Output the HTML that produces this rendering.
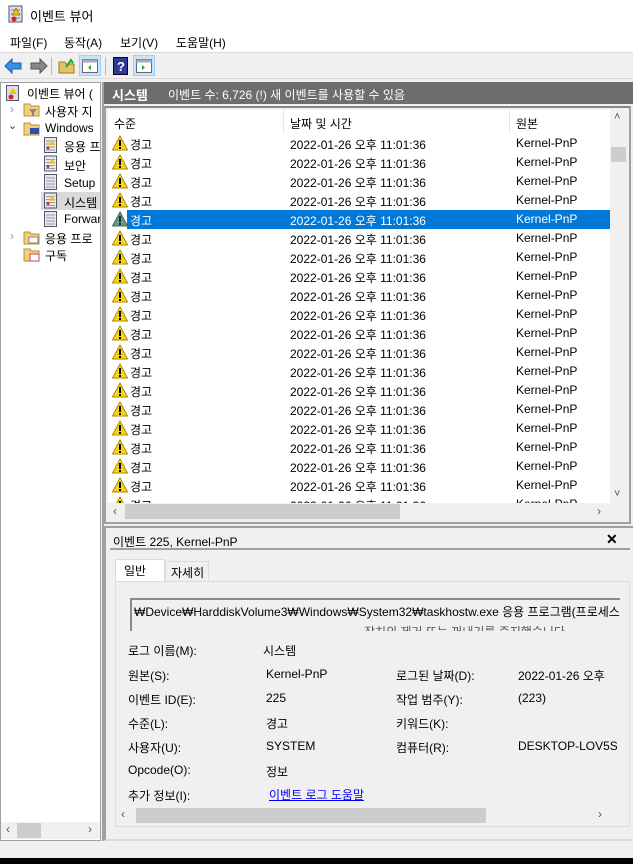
<!DOCTYPE html>
<html><head><meta charset="utf-8"><style>
*{margin:0;padding:0;box-sizing:border-box}
body{width:633px;height:864px;overflow:hidden;background:#f0f0f0;font-family:"Liberation Sans","Noto Sans CJK KR",sans-serif;font-size:12px;color:#000;position:relative}
.a{position:absolute;white-space:nowrap}
.row{position:absolute;left:108px;width:502px;height:19px}
.row span{position:absolute;top:2px}
.sel{background:#0078d7;color:#fff}
</style></head><body>
<div class="a" style="left:0;top:0;width:633px;height:30px;background:#fff"></div>
<svg class="a" style="left:8px;top:5px" width="16" height="18"><rect x="1" y="1" width="13" height="16" fill="#dde" stroke="#556"/><line x1="3" y1="5" x2="12" y2="5" stroke="#889"/><line x1="3" y1="9" x2="12" y2="9" stroke="#889"/><line x1="3" y1="13" x2="12" y2="13" stroke="#889"/><path d="M8 3 L12 10 L4 10Z" fill="#f5c400" stroke="#333" stroke-width=".5"/><circle cx="6" cy="14" r="2.5" fill="#d22"/></svg>
<div class="a" style="left:30px;top:6px;font-size:13px">이벤트 뷰어</div>
<div class="a" style="left:0;top:30px;width:633px;height:22px;background:#fff"></div>
<div class="a" style="left:10px;top:34px">파일(F)</div>
<div class="a" style="left:64px;top:34px">동작(A)</div>
<div class="a" style="left:120px;top:34px">보기(V)</div>
<div class="a" style="left:176px;top:34px">도움말(H)</div>
<div class="a" style="left:0;top:52px;width:633px;height:1px;background:#dadada"></div>
<svg class="a" style="left:4px;top:57px" width="44" height="18"><path d="M1 9 L8 2 L8 6 L17 6 L17 12 L8 12 L8 16Z" fill="#3a8ee6" stroke="#1a5fb0"/><path d="M43 9 L36 2 L36 6 L27 6 L27 12 L36 12 L36 16Z" fill="#888" stroke="#555"/></svg>
<div class="a" style="left:51px;top:57px;width:1px;height:18px;background:#bbb"></div>
<svg class="a" style="left:58px;top:57px" width="18" height="18"><path d="M1 5 L7 5 L8 7 L16 7 L16 16 L1 16Z" fill="#e8c068" stroke="#a07820"/><path d="M8 10 L13 3 L15 6" stroke="#2a2" stroke-width="2" fill="none"/></svg>
<div class="a" style="left:79px;top:55px;width:22px;height:21px;background:#cce4f7;border:1px solid #99d1ff"></div>
<svg class="a" style="left:82px;top:59px" width="16" height="14"><rect x=".5" y=".5" width="15" height="13" fill="#fff" stroke="#667"/><rect x=".5" y=".5" width="15" height="3" fill="#aab"/><path d="M9 6 L6 8.5 L9 11Z" fill="#2a2"/></svg>
<div class="a" style="left:105px;top:57px;width:1px;height:18px;background:#bbb"></div>
<svg class="a" style="left:113px;top:57px" width="15" height="18"><rect x=".5" y=".5" width="14" height="17" fill="#2d3a9a" stroke="#102"/><text x="4" y="14" fill="#fff" font-size="13" font-weight="bold" font-family="Liberation Sans">?</text></svg>
<div class="a" style="left:133px;top:55px;width:22px;height:21px;background:#cce4f7;border:1px solid #99d1ff"></div>
<svg class="a" style="left:136px;top:59px" width="16" height="14"><rect x=".5" y=".5" width="15" height="13" fill="#fff" stroke="#667"/><rect x=".5" y=".5" width="15" height="3" fill="#aab"/><path d="M6 6 L9 8.5 L6 11Z" fill="#2a2"/></svg>
<div class="a" style="left:0;top:78px;width:633px;height:1px;background:#dadada"></div>
<!-- tree -->
<div class="a" style="left:0;top:82px;width:101px;height:759px;background:#fff;border:1px solid #a0a0a0"></div>
<svg class="a" style="left:6px;top:85px" width="14" height="17"><rect x=".5" y=".5" width="12" height="15" fill="#dde" stroke="#556"/><path d="M7 3 L11 9 L3 9Z" fill="#f5c400"/><circle cx="5" cy="12" r="2.5" fill="#d22"/></svg>
<div class="a" style="left:27px;top:85px">이벤트 뷰어 (</div>
<div class="a" style="left:10px;top:102px;color:#999">›</div>
<svg class="a" style="left:23px;top:101px" width="18" height="16"><path d="M1 3 L7 3 L8 5 L16 5 L16 15 L1 15Z" fill="#f2d07a" stroke="#b89030"/><path d="M6 8 L14 8 L11 12 L11 15 L9 15 L9 12Z" fill="#888"/></svg>
<div class="a" style="left:45px;top:103px">사용자 지</div>
<div class="a" style="left:8px;top:119px;color:#333;font-size:11px">⌄</div>
<svg class="a" style="left:23px;top:120px" width="18" height="16"><path d="M1 3 L7 3 L8 5 L16 5 L16 15 L1 15Z" fill="#f2d07a" stroke="#b89030"/><rect x="7" y="8" width="9" height="6" fill="#2a4db0"/></svg>
<div class="a" style="left:45px;top:121px">Windows</div>
<div class="a" style="left:41px;top:192px;width:59px;height:18px;background:#d9d9d9"></div>
<svg class="a" style="left:44px;top:137px" width="14" height="92">
<g><rect x=".5" y=".5" width="12" height="15" fill="#e8e8f0" stroke="#556"/><line x1="2" y1="4" x2="11" y2="4" stroke="#99a"/><line x1="2" y1="7" x2="11" y2="7" stroke="#99a"/><line x1="2" y1="10" x2="11" y2="10" stroke="#99a"/><line x1="2" y1="13" x2="11" y2="13" stroke="#99a"/><path d="M8 3 L11 8 L5 8Z" fill="#f5c400"/><circle cx="4" cy="11" r="1.5" fill="#d22"/></g>
<g transform="translate(0,18.5)"><rect x=".5" y=".5" width="12" height="15" fill="#e8e8f0" stroke="#556"/><line x1="2" y1="4" x2="11" y2="4" stroke="#99a"/><line x1="2" y1="7" x2="11" y2="7" stroke="#99a"/><line x1="2" y1="10" x2="11" y2="10" stroke="#99a"/><line x1="2" y1="13" x2="11" y2="13" stroke="#99a"/><path d="M8 3 L11 8 L5 8Z" fill="#f5c400"/><circle cx="4" cy="11" r="1.5" fill="#d22"/></g>
<g transform="translate(0,37)"><rect x=".5" y=".5" width="12" height="15" fill="#e8e8f0" stroke="#556"/><line x1="2" y1="4" x2="11" y2="4" stroke="#99a"/><line x1="2" y1="7" x2="11" y2="7" stroke="#99a"/><line x1="2" y1="10" x2="11" y2="10" stroke="#99a"/><line x1="2" y1="13" x2="11" y2="13" stroke="#99a"/></g>
<g transform="translate(0,55.5)"><rect x=".5" y=".5" width="12" height="15" fill="#e8e8f0" stroke="#556"/><line x1="2" y1="4" x2="11" y2="4" stroke="#99a"/><line x1="2" y1="7" x2="11" y2="7" stroke="#99a"/><line x1="2" y1="10" x2="11" y2="10" stroke="#99a"/><line x1="2" y1="13" x2="11" y2="13" stroke="#99a"/><path d="M8 3 L11 8 L5 8Z" fill="#f5c400"/><circle cx="4" cy="11" r="1.5" fill="#d22"/></g>
<g transform="translate(0,74)"><rect x=".5" y=".5" width="12" height="15" fill="#e8e8f0" stroke="#556"/><line x1="2" y1="4" x2="11" y2="4" stroke="#99a"/><line x1="2" y1="7" x2="11" y2="7" stroke="#99a"/><line x1="2" y1="10" x2="11" y2="10" stroke="#99a"/><line x1="2" y1="13" x2="11" y2="13" stroke="#99a"/></g>
</svg>
<div class="a" style="left:64px;top:138px;width:36px;overflow:hidden">응용 프</div>
<div class="a" style="left:64px;top:157px">보안</div>
<div class="a" style="left:64px;top:176px">Setup</div>
<div class="a" style="left:64px;top:194px;width:36px;overflow:hidden">시스템</div>
<div class="a" style="left:64px;top:212px;width:36px;overflow:hidden">Forwar</div>
<div class="a" style="left:10px;top:229px;color:#999">›</div>
<svg class="a" style="left:23px;top:229px" width="18" height="16"><path d="M1 3 L7 3 L8 5 L16 5 L16 15 L1 15Z" fill="#f2d07a" stroke="#b89030"/><rect x="6" y="8" width="9" height="6" fill="#fff" stroke="#888"/></svg>
<div class="a" style="left:45px;top:230px;width:55px;overflow:hidden">응용 프로</div>
<svg class="a" style="left:23px;top:246px" width="18" height="16"><path d="M1 3 L7 3 L8 5 L16 5 L16 15 L1 15Z" fill="#f2d07a" stroke="#b89030"/><rect x="7" y="8" width="9" height="7" fill="#fff" stroke="#c44"/></svg>
<div class="a" style="left:45px;top:247px">구독</div>
<div class="a" style="left:1px;top:822px;width:99px;height:17px;background:#f0f0f0"></div>
<div class="a" style="left:6px;top:822px;color:#555">‹</div>
<div class="a" style="left:17px;top:823px;width:24px;height:15px;background:#cdcdcd"></div>
<div class="a" style="left:88px;top:822px;color:#555">›</div>
<div class="a" style="left:102px;top:82px;width:2px;height:759px;background:#a0a0a0"></div>
<div class="a" style="left:104px;top:82px;width:529px;height:22px;background:#6d6d6d"></div>
<div class="a" style="left:112px;top:85px;color:#fff;font-size:13px;font-weight:bold">시스템</div>
<div class="a" style="left:168px;top:86px;color:#fff">이벤트 수: 6,726 (!) 새 이벤트를 사용할 수 있음</div>
<div class="a" style="left:104px;top:106px;width:527px;height:418px;border:2px solid #a0a0a0;border-top-color:#888"></div>
<div class="a" style="left:108px;top:110px;width:502px;height:393px;background:#fff;overflow:hidden">
<div class="a" style="left:6px;top:5px">수준</div>
<div class="a" style="left:175px;top:0;width:1px;height:24px;background:#e5e5e5"></div>
<div class="a" style="left:182px;top:5px">날짜 및 시간</div>
<div class="a" style="left:401px;top:0;width:1px;height:24px;background:#e5e5e5"></div>
<div class="a" style="left:408px;top:5px">원본</div>
</div>
<svg width="0" height="0" style="position:absolute"><defs><g id="w"><path d="M8 1 L15.5 15 L0.5 15Z" fill="#f7d51b" stroke="#b08a00"/><rect x="7" y="5" width="2" height="6" fill="#000"/><rect x="7" y="12" width="2" height="2" fill="#000"/></g><g id="wg"><path d="M8 1 L15.5 15 L0.5 15Z" fill="#6b9a80" stroke="#3e6a55"/><rect x="7" y="5" width="2" height="6" fill="#0a2a50"/><rect x="7" y="12" width="2" height="2" fill="#0a2a50"/></g></defs></svg>
<div class="a" style="left:108px;top:134px;width:502px;height:369px;overflow:hidden">
<div id="rows"></div>
</div>
<div class="a" style="left:610px;top:110px;width:17px;height:393px;background:#f0f0f0"></div>
<div class="a" style="left:614px;top:111px;color:#555;font-size:11px">˄</div>
<div class="a" style="left:611px;top:147px;width:15px;height:15px;background:#cdcdcd"></div>
<div class="a" style="left:614px;top:488px;color:#555;font-size:11px">˅</div>
<div class="a" style="left:108px;top:503px;width:519px;height:17px;background:#f0f0f0"></div>
<div class="a" style="left:113px;top:504px;color:#555">‹</div>
<div class="a" style="left:125px;top:504px;width:275px;height:15px;background:#cdcdcd"></div>
<div class="a" style="left:597px;top:504px;color:#555">›</div>
<div class="a" style="left:104px;top:526px;width:529px;height:315px;border:2px solid #a0a0a0;border-right:none;border-bottom:2px solid #dcdcdc"></div>
<div class="a" style="left:113px;top:533px">이벤트 225, Kernel-PnP</div>
<div class="a" style="left:606px;top:531px;font-weight:bold;font-size:14px">✕</div>
<div class="a" style="left:110px;top:548px;width:520px;height:2px;background:#a0a0a0"></div>
<div class="a" style="left:115px;top:559px;width:50px;height:23px;background:#fff;border:1px solid #dcdcdc;border-bottom:none"></div>
<div class="a" style="left:124px;top:562px">일반</div>
<div class="a" style="left:165px;top:561px;width:44px;height:20px;background:#f0f0f0;border:1px solid #dcdcdc;border-bottom:none"></div>
<div class="a" style="left:171px;top:564px">자세히</div>
<div class="a" style="left:115px;top:581px;width:515px;height:246px;border:1px solid #dcdcdc"></div>
<div class="a" style="left:130px;top:598px;width:490px;height:33px;border:2px solid #8a8a8a;border-right:none;border-bottom:none;overflow:hidden"><div style="padding:3px 0 0 2px;white-space:nowrap">₩Device₩HarddiskVolume3₩Windows₩System32₩taskhostw.exe 응용 프로그램(프로세스</div><div style="padding:3px 0 0 2px;white-space:nowrap;color:#555;margin-left:230px">장치의 제거 또는 꺼내기를 중지했습니다.</div></div>
<div class="a" style="left:128px;top:642px">로그 이름(M):</div><div class="a" style="left:263px;top:642px">시스템</div>
<div class="a" style="left:128px;top:667px">원본(S):</div><div class="a" style="left:266px;top:667px">Kernel-PnP</div>
<div class="a" style="left:396px;top:667px">로그된 날짜(D):</div><div class="a" style="left:518px;top:667px">2022-01-26 오후</div>
<div class="a" style="left:128px;top:691px">이벤트 ID(E):</div><div class="a" style="left:266px;top:691px">225</div>
<div class="a" style="left:396px;top:691px">작업 범주(Y):</div><div class="a" style="left:518px;top:691px">(223)</div>
<div class="a" style="left:128px;top:715px">수준(L):</div><div class="a" style="left:266px;top:715px">경고</div>
<div class="a" style="left:396px;top:715px">키워드(K):</div>
<div class="a" style="left:128px;top:739px">사용자(U):</div><div class="a" style="left:266px;top:739px">SYSTEM</div>
<div class="a" style="left:396px;top:739px">컴퓨터(R):</div><div class="a" style="left:518px;top:739px;width:99px;overflow:hidden">DESKTOP-LOV5SP</div>
<div class="a" style="left:128px;top:763px">Opcode(O):</div><div class="a" style="left:266px;top:763px">정보</div>
<div class="a" style="left:128px;top:787px">추가 정보(I):</div><div class="a" style="left:269px;top:786px;color:#00f;text-decoration:underline">이벤트 로그 도움말</div>
<div class="a" style="left:116px;top:807px;width:513px;height:17px;background:#f0f0f0"></div>
<div class="a" style="left:121px;top:807px;color:#555">‹</div>
<div class="a" style="left:136px;top:808px;width:350px;height:15px;background:#cdcdcd"></div>
<div class="a" style="left:598px;top:807px;color:#555">›</div>
<div class="a" style="left:0;top:858px;width:633px;height:6px;background:#000"></div>
<script>
var h='';for(var i=0;i<20;i++){var s=i==4;h+='<div class="row'+(s?' sel':'')+'" style="left:0;top:'+(i*19)+'px;'+(s?'left:19px;width:483px;':'')+'">'+
'<svg style="position:absolute;left:'+(s?-15:4)+'px;top:1px" width="16" height="16"><use href="#'+(s?'wg':'w')+'"/></svg>'+
'<span style="left:'+(s?3:22)+'px">경고</span><span style="left:'+(s?163:182)+'px">2022-01-26 오후 11:01:36</span><span style="left:'+(s?389:408)+'px">Kernel-PnP</span></div>';}
document.getElementById('rows').innerHTML=h;
</script>
</body></html>
